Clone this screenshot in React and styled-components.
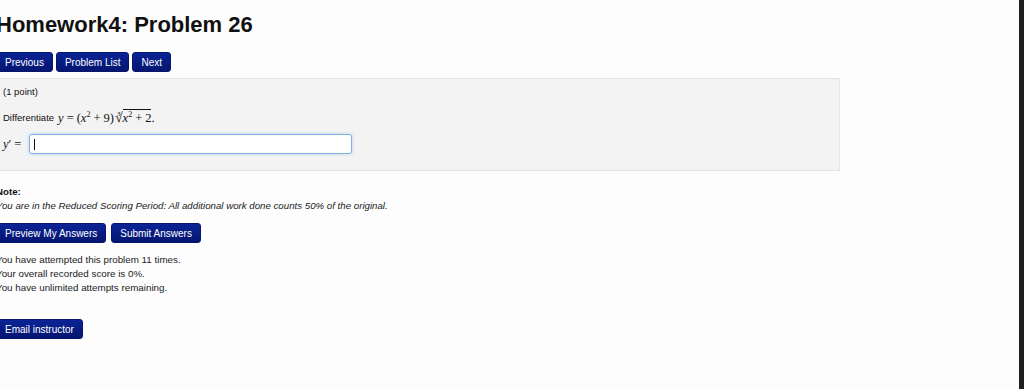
import React from "react";
import styled, { createGlobalStyle } from "styled-components";

const GlobalStyle = createGlobalStyle`
  html, body {
    margin: 0;
    padding: 0;
    background: #fdfdfd;
    overflow: hidden;
  }
  body {
    font-family: "Liberation Sans", Arial, sans-serif;
    color: #111;
  }
`;

const Frame = styled.div`
  display: flex;
  width: 1024px;
  height: 389px;
`;

const Page = styled.div`
  flex: 1;
  overflow: hidden;
`;

const Edge = styled.div`
  width: 5px;
  background: #1e1e1e;
`;

const Content = styled.div`
  margin-left: -4px;
  display: flex;
  flex-direction: column;
  align-items: flex-start;
`;

const Title = styled.h1`
  margin: 12px 0 0;
  font-size: 22px;
  line-height: 26px;
  font-weight: bold;
  color: #111;
`;

const ButtonRow = styled.div`
  display: flex;
  gap: ${(p) => p.gap || 3}px;
  margin-top: ${(p) => p.top}px;
`;

const Button = styled.button`
  font-family: "Liberation Sans", Arial, sans-serif;
  font-size: 10px;
  line-height: 12px;
  height: 20px;
  padding: 4px 8px;
  color: #fff;
  border: 1px solid #07166b;
  border-radius: 3px;
  background: linear-gradient(#0b2396, #041670);
  cursor: pointer;
`;

const ProblemBox = styled.div`
  box-sizing: border-box;
  margin-top: 6px;
  width: 844px;
  height: 93px;
  padding: 6px 6px 0;
  background: #f3f3f3;
  border: 1px solid #e4e4e4;
  font-size: 9.5px;
  line-height: 14px;
`;

const Line = styled.div`
  margin-top: ${(p) => p.top || 0}px;
  display: flex;
  align-items: center;
  height: ${(p) => p.h || 14}px;
`;

const Math = styled.span`
  font-family: "Liberation Serif", "Times New Roman", serif;
  font-size: 12.5px;
  margin-left: ${(p) => p.left || 0}px;
  white-space: nowrap;
  display: inline-block;
`;

const Var = styled.i`
  font-style: italic;
`;

const Op = styled.span`
  margin: 0 3px;
`;

const Sup = styled.sup`
  font-size: 8px;
  vertical-align: 5px;
  line-height: 0;
`;

const RadSign = styled.span`
  position: relative;
  font-size: 14px;
  margin-left: 1px;
`;

const RadIndex = styled.span`
  position: absolute;
  font-size: 7px;
  left: 2px;
  top: -3px;
`;

const Radicand = styled.span`
  border-top: 1px solid #111;
  padding-top: 1px;
`;

const AnswerInput = styled.div`
  box-sizing: border-box;
  width: 323px;
  height: 20px;
  margin-left: 5px;
  background: #fff;
  border: 1px solid #7fb1e8;
  border-radius: 3px;
  box-shadow: 0 0 3px rgba(100, 160, 230, 0.5);
  display: flex;
  align-items: center;
  padding-left: 4px;
`;

const Caret = styled.span`
  width: 1px;
  height: 11px;
  background: #111;
`;

const Note = styled.div`
  margin-top: 14px;
  font-size: 9.7px;
  line-height: 14px;
`;

const Strong = styled.div`
  font-weight: bold;
`;

const Italic = styled.div`
  font-style: italic;
  color: #222;
`;

const Status = styled.div`
  margin-top: 10px;
  font-size: 9.8px;
  line-height: 14px;
  color: #222;
`;

function App() {
  return (
    <>
      <GlobalStyle />
      <Frame>
        <Page>
          <Content>
            <Title>Homework4: Problem 26</Title>
            <ButtonRow top={14}>
              <Button>Previous</Button>
              <Button>Problem List</Button>
              <Button>Next</Button>
            </ButtonRow>
            <ProblemBox>
              <Line>(1 point)</Line>
              <Line top={11} h={16}>
                Differentiate
                <Math left={4}>
                  <Var>y</Var>
                  <Op>=</Op>(<Var>x</Var>
                  <Sup>2</Sup>
                  <Op>+</Op>9)
                  <RadSign>
                    <RadIndex>3</RadIndex>√
                  </RadSign>
                  <Radicand>
                    <Var>x</Var>
                    <Sup>2</Sup>
                    <Op>+</Op>2
                  </Radicand>
                  .
                </Math>
              </Line>
              <Line top={8} h={20}>
                <Math>
                  <Var>y</Var>′<Op>=</Op>
                </Math>
                <AnswerInput>
                  <Caret />
                </AnswerInput>
              </Line>
            </ProblemBox>
            <Note>
              <Strong>Note:</Strong>
              <Italic>
                You are in the Reduced Scoring Period: All additional work done
                counts 50% of the original.
              </Italic>
            </Note>
            <ButtonRow top={10} gap={5}>
              <Button>Preview My Answers</Button>
              <Button>Submit Answers</Button>
            </ButtonRow>
            <Status>
              <div>You have attempted this problem 11 times.</div>
              <div>Your overall recorded score is 0%.</div>
              <div>You have unlimited attempts remaining.</div>
            </Status>
            <ButtonRow top={24}>
              <Button>Email instructor</Button>
            </ButtonRow>
          </Content>
        </Page>
        <Edge />
      </Frame>
    </>
  );
}

export default App;
